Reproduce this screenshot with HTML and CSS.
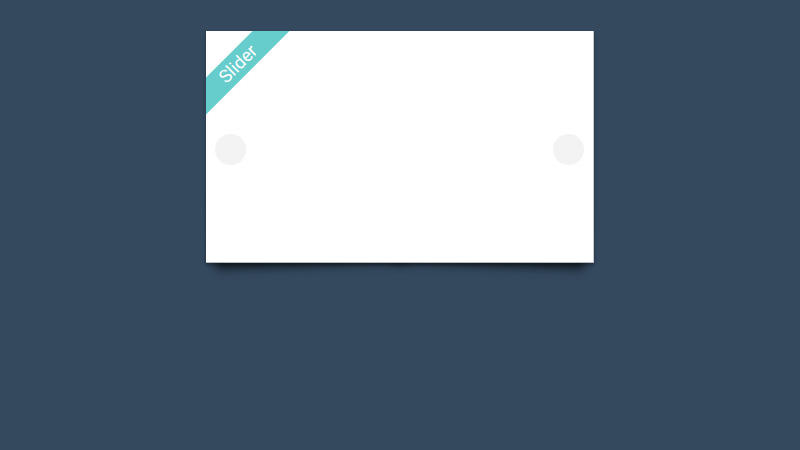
FILE: index.html
```html
<!DOCTYPE html>
<html>
<head>
<meta charset="utf-8">
<link rel="stylesheet" href="styles.css">
</head>
<body>
<div class="stage">
  <div class="card">
    <div class="card-inner">
      <div class="ribbon"><span>Slider</span></div>
      <div class="slides">
        <button class="nav"></button>
        <button class="nav"></button>
      </div>
    </div>
  </div>
</div>
</body>
</html>
```
FILE: styles.css
```css
html, body {
  margin: 0;
  padding: 0;
  height: 100%;
}
body {
  background: #34495e;
  font-family: Roboto, "Liberation Sans", sans-serif;
}
.stage {
  display: flex;
  justify-content: center;
  padding-top: 31px;
}
.card {
  position: relative;
  width: 388px;
  height: 232px;
  box-shadow: 0 2px 3px rgba(0, 0, 0, 0.35);
}
.card::before,
.card::after {
  content: "";
  position: absolute;
  z-index: -1;
  bottom: 12px;
  width: 50%;
  height: 30%;
  box-shadow: 0 15px 10px rgba(0, 0, 0, 0.6);
}
.card::before {
  left: 8px;
  transform: rotate(-2deg);
}
.card::after {
  right: 8px;
  transform: rotate(2deg);
}
.card-inner {
  position: relative;
  width: 100%;
  height: 100%;
  background: #fff;
  overflow: hidden;
  border-right: 1px solid #c8ccd0;
  border-bottom: 1px solid #b8bcc0;
  box-sizing: border-box;
}
.ribbon {
  position: absolute;
  left: -43px;
  top: 20px;
  width: 150px;
  height: 26px;
  background: #66cccc;
  transform: rotate(-45deg);
  display: flex;
  align-items: center;
  justify-content: center;
  color: #fff;
  font-size: 18px;
  line-height: 26px;
}
.slides {
  height: 100%;
  display: flex;
  align-items: center;
  justify-content: space-between;
  padding: 0 9px 0 9px;
  box-sizing: border-box;
}
.nav {
  width: 31px;
  height: 31px;
  border-radius: 50%;
  border: none;
  background: #f3f3f3;
  padding: 0;
  margin-top: 5px;
}
```
